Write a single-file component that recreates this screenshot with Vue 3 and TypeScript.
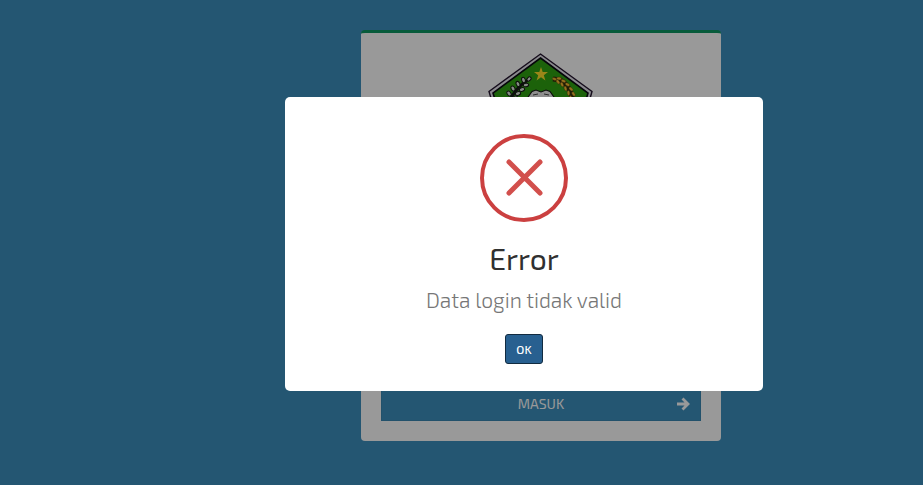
<script setup lang="ts">
import { ref } from 'vue'

const title = 'Error'
const message = 'Data login tidak valid'
const open = ref(true)
</script>

<template>
  <div class="page">
    <main class="card">
      <svg class="logo" viewBox="0 0 106 106" aria-hidden="true">
        <path d="M52.5 1 L104 38.5 L86 103 H20 L1 38.5 Z" fill="#e6e4ec" stroke="#23142e" stroke-width="1.4" />
        <path d="M52.5 5 L100 40 L83 99 H23 L5 40 Z" fill="#2fa312" stroke="#0a0a12" stroke-width="1.6" />
        <path d="M53 14 L54.7 19 H60 L55.8 22.2 L57.4 27.4 L53 24.2 L48.6 27.4 L50.2 22.2 L46 19 H51.3 Z" fill="#ffe02b" />
        <path d="M41 26 C32 32 24 39 20 52" fill="none" stroke="#141a14" stroke-width="3" />
        <g fill="#e2eadf" stroke="#141a14" stroke-width="1">
          <ellipse cx="41" cy="26" rx="1.7" ry="2.4" transform="rotate(45 41 26)" />
          <ellipse cx="35.5" cy="27" rx="1.8" ry="2.7" transform="rotate(-20 35.5 27)" />
          <ellipse cx="38" cy="32" rx="1.8" ry="2.7" transform="rotate(80 38 32)" />
          <ellipse cx="30" cy="31" rx="1.8" ry="2.7" transform="rotate(-25 30 31)" />
          <ellipse cx="34" cy="36.5" rx="1.8" ry="2.7" transform="rotate(75 34 36.5)" />
          <ellipse cx="25" cy="35.5" rx="1.8" ry="2.7" transform="rotate(-30 25 35.5)" />
          <ellipse cx="30" cy="40.5" rx="1.8" ry="2.7" transform="rotate(70 30 40.5)" />
          <ellipse cx="21" cy="40.5" rx="1.8" ry="2.7" transform="rotate(-35 21 40.5)" />
          <ellipse cx="27" cy="45" rx="1.8" ry="2.7" transform="rotate(65 27 45)" />
        </g>
        <path d="M65 26 L72 27 C79 31 84 37 85 50" fill="none" stroke="#33300c" stroke-width="5" />
        <g fill="#f5bd32" stroke="#4d3a08" stroke-width=".4">
          <ellipse cx="66.5" cy="26" rx="2.4" ry="1.3" transform="rotate(15 66.5 26)" />
          <ellipse cx="71" cy="25.5" rx="2.5" ry="1.4" transform="rotate(5 71 25.5)" />
          <ellipse cx="70" cy="28.8" rx="2.5" ry="1.4" transform="rotate(50 70 28.8)" />
          <ellipse cx="75.5" cy="28" rx="2.5" ry="1.4" transform="rotate(20 75.5 28)" />
          <ellipse cx="74" cy="31.5" rx="2.5" ry="1.4" transform="rotate(65 74 31.5)" />
          <ellipse cx="79.5" cy="31.5" rx="2.5" ry="1.4" transform="rotate(30 79.5 31.5)" />
          <ellipse cx="77.5" cy="35.5" rx="2.5" ry="1.4" transform="rotate(75 77.5 35.5)" />
          <ellipse cx="83" cy="36" rx="2.5" ry="1.4" transform="rotate(45 83 36)" />
          <ellipse cx="80.5" cy="40" rx="2.5" ry="1.4" transform="rotate(85 80.5 40)" />
          <ellipse cx="85.5" cy="41" rx="2.5" ry="1.4" transform="rotate(55 85.5 41)" />
          <ellipse cx="82.5" cy="45" rx="2.5" ry="1.4" transform="rotate(90 82.5 45)" />
        </g>
        <path d="M38 47 L44 38.5 L48 37 L53 39 L58 37 L62 38.5 L68 47 V70 H38 Z" fill="#eee" stroke="#151515" stroke-width="1.1" />
        <path d="M45 42 L50 41 M56 41 L61 42" stroke="#444" stroke-width="1" />
      </svg>
      <button class="submit" type="button">
        <span>MASUK</span>
        <svg viewBox="0 0 14 14" aria-hidden="true">
          <path d="M1 7 H11 M6.5 1.5 L12 7 L6.5 12.5" fill="none" stroke="currentColor" stroke-width="2.8" />
        </svg>
      </button>
    </main>

    <div v-if="open" class="overlay">
      <section class="dialog" role="alertdialog" aria-labelledby="dialog-title" aria-describedby="dialog-message">
        <svg class="error-icon" viewBox="0 0 88 88" aria-hidden="true">
          <circle cx="44" cy="44" r="42" fill="none" stroke="#cb4040" stroke-width="4" />
          <path d="M29 28 L60 59 M60 28 L29 59" stroke="#d24f4c" stroke-width="5" stroke-linecap="round" />
        </svg>
        <h2 id="dialog-title">{{ title }}</h2>
        <p id="dialog-message">{{ message }}</p>
        <button class="ok" type="button" @click="open = false">OK</button>
      </section>
    </div>
  </div>
</template>

<style>
body {
  margin: 0;
  background: #3c8fbe;
}
</style>

<style scoped>
.page {
  box-sizing: border-box;
  min-height: 100vh;
  padding: 30px 0 44px 159px;
  background: #3c8fbe;
  font-family: "Exo 2", "Exo", Roboto, sans-serif;
}

.card {
  box-sizing: border-box;
  display: flex;
  flex-direction: column;
  align-items: center;
  justify-content: space-between;
  width: 100%;
  max-width: 360px;
  min-height: 411px;
  margin: 0 auto;
  padding: 20px;
  border-top: 3px solid #0c9863;
  border-radius: 4px;
  background: #fff;
}

.logo {
  width: 106px;
  height: 106px;
}

.submit {
  display: grid;
  grid-template-columns: 1fr auto 1fr;
  align-items: center;
  width: 100%;
  height: 34px;
  padding: 0 10px;
  border: 1px solid #3a87b2;
  background: #3c8fbe;
  color: #fff;
  font: 14px/20px "Exo 2", "Exo", Roboto, sans-serif;
}

.submit span {
  grid-column: 2;
}

.submit svg {
  justify-self: end;
  width: 14px;
  height: 14px;
}

.overlay {
  position: fixed;
  inset: 0;
  display: grid;
  place-items: center;
  padding: 3px 0 0 125px;
  background: rgba(0, 0, 0, 0.4);
}

.dialog {
  box-sizing: border-box;
  display: flex;
  flex-direction: column;
  align-items: center;
  width: 100%;
  max-width: 478px;
  padding: 37px 20px 27px;
  border-radius: 5px;
  background: #fff;
  text-align: center;
}

.error-icon {
  width: 88px;
  height: 88px;
}

.dialog h2 {
  margin: 18px 0 0;
  color: #303030;
  font-size: 30px;
  font-weight: 400;
  line-height: 36px;
}

.dialog p {
  margin: 10px 0 20px;
  color: #777;
  font-size: 21px;
  font-weight: 300;
  line-height: 28px;
}

.ok {
  height: 30px;
  padding: 0 10px;
  border: 1px solid #122b40;
  border-radius: 3px;
  background: #286090;
  color: #fff;
  font: 500 12px/18px "Exo 2", "Exo", Roboto, sans-serif;
}
</style>
